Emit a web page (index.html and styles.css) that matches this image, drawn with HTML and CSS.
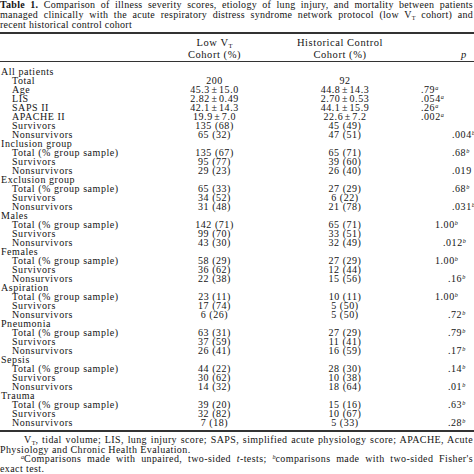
FILE: index.html
```html
<!DOCTYPE html>
<html>
<head>
<meta charset="utf-8">
<link rel="stylesheet" href="styles.css">
</head>
<body>
<div class="page">
  <p class="caption">
    <span class="ln full"><b>Table 1.</b> Comparison of illness severity scores, etiology of lung injury, and mortality between patients</span>
    <span class="ln full">managed clinically with the acute respiratory distress syndrome network protocol (low V<sub>T</sub> cohort) and</span>
    <span class="ln">recent historical control cohort</span>
  </p>
  <table class="data">
    <thead>
      <tr>
        <th class="lbl"></th>
        <th class="c1">Low V<sub>T</sub><br>Cohort (%)</th>
        <th class="c2">Historical Control<br>Cohort (%)</th>
        <th class="pc"><i>p</i></th>
      </tr>
    </thead>
    <tbody>
      <tr class="first"><td class="grp">All patients</td><td class="n"></td><td class="n"></td><td class="p"></td></tr>
      <tr><td class="sub">Total</td><td class="n">200</td><td class="n">92</td><td class="p"></td></tr>
      <tr><td class="sub">Age</td><td class="n pm">45.3 ± 15.0</td><td class="n pm">44.8 ± 14.3</td><td class="p pa">.79<sup>a</sup></td></tr>
      <tr><td class="sub">LIS</td><td class="n pm">2.82 ± 0.49</td><td class="n pm">2.70 ± 0.53</td><td class="p pa">.054<sup>a</sup></td></tr>
      <tr><td class="sub">SAPS II</td><td class="n pm">42.1 ± 14.3</td><td class="n pm">44.1 ± 15.9</td><td class="p pa">.26<sup>a</sup></td></tr>
      <tr><td class="sub">APACHE II</td><td class="n pm">19.9 ± 7.0</td><td class="n pm">22.6 ± 7.2</td><td class="p pa">.002<sup>a</sup></td></tr>
      <tr><td class="sub">Survivors</td><td class="n">135 (68)</td><td class="n">45 (49)</td><td class="p"></td></tr>
      <tr><td class="sub">Nonsurvivors</td><td class="n">65 (32)</td><td class="n">47 (51)</td><td class="p pb">.004<sup>b</sup></td></tr>

      <tr><td class="grp">Inclusion group</td><td class="n"></td><td class="n"></td><td class="p"></td></tr>
      <tr><td class="sub">Total (% group sample)</td><td class="n">135 (67)</td><td class="n">65 (71)</td><td class="p pb">.68<sup>b</sup></td></tr>
      <tr><td class="sub">Survivors</td><td class="n">95 (77)</td><td class="n">39 (60)</td><td class="p"></td></tr>
      <tr><td class="sub">Nonsurvivors</td><td class="n">29 (23)</td><td class="n">26 (40)</td><td class="p pb">.019</td></tr>

      <tr><td class="grp">Exclusion group</td><td class="n"></td><td class="n"></td><td class="p"></td></tr>
      <tr><td class="sub">Total (% group sample)</td><td class="n">65 (33)</td><td class="n">27 (29)</td><td class="p pb">.68<sup>b</sup></td></tr>
      <tr><td class="sub">Survivors</td><td class="n">34 (52)</td><td class="n">6 (22)</td><td class="p"></td></tr>
      <tr><td class="sub">Nonsurvivors</td><td class="n">31 (48)</td><td class="n">21 (78)</td><td class="p pb">.031<sup>b</sup></td></tr>

      <tr><td class="grp">Males</td><td class="n"></td><td class="n"></td><td class="p"></td></tr>
      <tr><td class="sub">Total (% group sample)</td><td class="n">142 (71)</td><td class="n">65 (71)</td><td class="p pc1">1.00<sup>b</sup></td></tr>
      <tr><td class="sub">Survivors</td><td class="n">99 (70)</td><td class="n">33 (51)</td><td class="p"></td></tr>
      <tr><td class="sub">Nonsurvivors</td><td class="n">43 (30)</td><td class="n">32 (49)</td><td class="p pd">.012<sup>b</sup></td></tr>

      <tr><td class="grp">Females</td><td class="n"></td><td class="n"></td><td class="p"></td></tr>
      <tr><td class="sub">Total (% group sample)</td><td class="n">58 (29)</td><td class="n">27 (29)</td><td class="p pc1">1.00<sup>b</sup></td></tr>
      <tr><td class="sub">Survivors</td><td class="n">36 (62)</td><td class="n">12 (44)</td><td class="p"></td></tr>
      <tr><td class="sub">Nonsurvivors</td><td class="n">22 (38)</td><td class="n">15 (56)</td><td class="p pe">.16<sup>b</sup></td></tr>

      <tr><td class="grp">Aspiration</td><td class="n"></td><td class="n"></td><td class="p"></td></tr>
      <tr><td class="sub">Total (% group sample)</td><td class="n">23 (11)</td><td class="n">10 (11)</td><td class="p pc1">1.00<sup>b</sup></td></tr>
      <tr><td class="sub">Survivors</td><td class="n">17 (74)</td><td class="n">5 (50)</td><td class="p"></td></tr>
      <tr><td class="sub">Nonsurvivors</td><td class="n">6 (26)</td><td class="n">5 (50)</td><td class="p pe">.72<sup>b</sup></td></tr>

      <tr><td class="grp">Pneumonia</td><td class="n"></td><td class="n"></td><td class="p"></td></tr>
      <tr><td class="sub">Total (% group sample)</td><td class="n">63 (31)</td><td class="n">27 (29)</td><td class="p pe">.79<sup>b</sup></td></tr>
      <tr><td class="sub">Survivors</td><td class="n">37 (59)</td><td class="n">11 (41)</td><td class="p"></td></tr>
      <tr><td class="sub">Nonsurvivors</td><td class="n">26 (41)</td><td class="n">16 (59)</td><td class="p pe">.17<sup>b</sup></td></tr>

      <tr><td class="grp">Sepsis</td><td class="n"></td><td class="n"></td><td class="p"></td></tr>
      <tr><td class="sub">Total (% group sample)</td><td class="n">44 (22)</td><td class="n">28 (30)</td><td class="p pe">.14<sup>b</sup></td></tr>
      <tr><td class="sub">Survivors</td><td class="n">30 (62)</td><td class="n">10 (38)</td><td class="p"></td></tr>
      <tr><td class="sub">Nonsurvivors</td><td class="n">14 (32)</td><td class="n">18 (64)</td><td class="p pe">.01<sup>b</sup></td></tr>

      <tr><td class="grp">Trauma</td><td class="n"></td><td class="n"></td><td class="p"></td></tr>
      <tr><td class="sub">Total (% group sample)</td><td class="n">39 (20)</td><td class="n">15 (16)</td><td class="p pe">.63<sup>b</sup></td></tr>
      <tr><td class="sub">Survivors</td><td class="n">32 (82)</td><td class="n">10 (67)</td><td class="p"></td></tr>
      <tr class="last"><td class="sub">Nonsurvivors</td><td class="n">7 (18)</td><td class="n">5 (33)</td><td class="p pe">.28<sup>b</sup></td></tr>
    </tbody>
  </table>
  <div class="notes">
    <p class="n1">
      <span class="ln full">V<sub>T</sub>, tidal volume; LIS, lung injury score; SAPS, simplified acute physiology score; APACHE, Acute</span>
      <span class="ln">Physiology and Chronic Health Evaluation.</span>
    </p>
    <p class="n2">
      <span class="ln full"><sup>a</sup>Comparisons made with unpaired, two-sided <i>t</i>-tests; <sup>b</sup>comparisons made with two-sided Fisher's</span>
      <span class="ln">exact test.</span>
    </p>
  </div>
</div>
</body>
</html>
```

FILE: styles.css
```css
html, body {
  margin: 0;
  padding: 0;
  background: #ffffff;
  overflow: hidden;
}
body {
  width: 474px;
  height: 474px;
  color: #141414;
  font-family: "Liberation Serif", "Times New Roman", serif;
}
.page {
  width: 474px;
}
.ln {
  display: block;
  text-align: left;
}
.ln.full {
  text-align: justify;
  text-align-last: justify;
}
.caption {
  margin: 0 1px 0 0;
  font-size: 10px;
  line-height: 10px;
  letter-spacing: 0.28px;
}
.caption b {
  font-weight: bold;
}
sub, sup {
  line-height: 0;
  font-size: 0.62em;
  letter-spacing: 0;
}
sub {
  vertical-align: -0.25em;
}
sup {
  vertical-align: 0.45em;
  font-style: italic;
}
.data {
  margin-top: 2px;
  width: 474px;
  table-layout: fixed;
  border-collapse: collapse;
  border-top: 2px solid #333333;
  border-bottom: 2px solid #333333;
}
.data th, .data td {
  padding: 0;
  white-space: nowrap;
}
.data thead th {
  font-weight: normal;
  font-size: 10.5px;
  letter-spacing: 0.55px;
  line-height: 12px;
  padding-top: 3px;
  border-bottom: 1.5px solid #333333;
  vertical-align: top;
}
.data th.lbl { width: 160px; }
.data th.c1 { width: 109px; text-align: center; }
.data th.c2 { width: 152px; text-align: center; padding-right: 10px; box-sizing: border-box; }
.data th.pc { width: 53px; text-align: left; padding-left: 40px; vertical-align: bottom; }
.data tbody td {
  font-size: 10px;
  letter-spacing: 0.55px;
  line-height: 9px;
  height: 9px;
}
.data tbody tr.first td { padding-top: 5px; }
.data tbody tr.last td { padding-bottom: 2.5px; }
td.grp { padding-left: 1px; }
td.sub { padding-left: 12px; }
td.n {
  text-align: center;
}
td.pm {
  letter-spacing: 0.2px;
  word-spacing: -1.5px;
}
td.p {
  text-align: left;
  letter-spacing: 0;
}
td.pa { padding-left: 0; }
td.pb { padding-left: 31px; }
td.pc1 { padding-left: 14px; }
td.pd { padding-left: 22px; }
td.pe { padding-left: 27px; }
.notes {
  margin-top: 3.5px;
  margin-right: 1px;
  font-size: 10px;
  letter-spacing: 0.4px;
  line-height: 9.5px;
}
.notes p {
  margin: 0;
}
.notes p.n1 .ln:first-child {
  padding-left: 24px;
}
.notes p.n2 .ln:first-child {
  padding-left: 21px;
}
```
